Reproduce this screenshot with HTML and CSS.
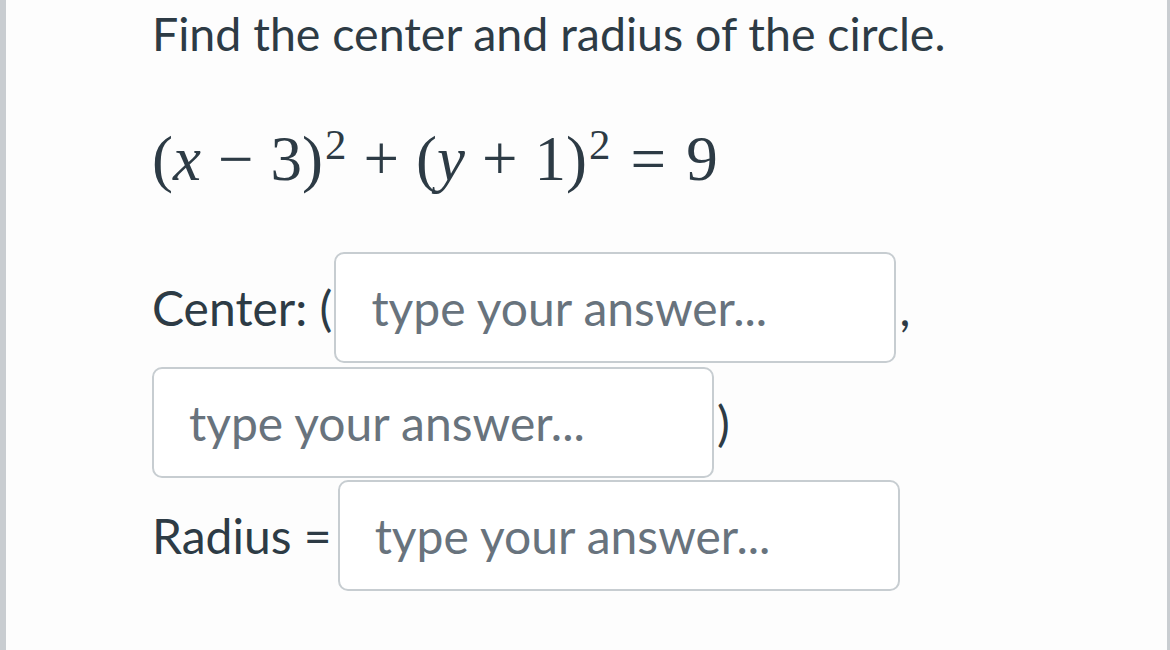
FILE: index.html
```html
<!DOCTYPE html>
<html lang="en">
<head>
<meta charset="utf-8">
<title>Find the center and radius of the circle</title>
<link rel="stylesheet" href="styles.css">
</head>
<body>
<div class="page">
  <div class="edge edge-left"></div>
  <main class="content">
    <p class="title">Find the center and radius of the circle.</p>
    <div class="math" aria-label="(x-3)^2+(y+1)^2=9">
      <span class="m-open">(</span><var>x</var><span class="bin">−</span><span>3</span><span class="m-close">)</span><sup>2</sup><span class="bin">+</span><span class="m-open">(</span><var>y</var><span class="bin">+</span><span>1</span><span class="m-close">)</span><sup>2</sup><span class="rel">=</span><span>9</span>
    </div>
    <div class="answers">
      <div class="row">
        <span class="label">Center: (</span><span class="field field-center">type your answer...</span><span class="after">,</span>
      </div>
      <div class="row row-second">
        <span class="field">type your answer...</span><span class="after">)</span>
      </div>
      <div class="row row-third">
        <span class="label">Radius =</span><span class="field field-radius">type your answer...</span>
      </div>
    </div>
  </main>
  <div class="edge edge-right"></div>
</div>
</body>
</html>
```
FILE: styles.css
```css
html, body {
  margin: 0;
  padding: 0;
  background: #fdfdfd;
}

.page {
  display: flex;
  min-height: 650px;
  width: 1170px;
}

.edge {
  background: #c9cdd1;
  flex: none;
}
.edge-left { width: 6px; }
.edge-right { width: 3px; margin-left: auto; }

.content {
  flex: 1;
  padding: 5px 0 0 146px;
  color: #2d3b45;
  font-family: Lato, "Open Sans", sans-serif;
  font-size: 48px;
}

.title {
  margin: 0;
  font-size: 46.5px;
  line-height: 57px;
}

.math {
  margin-top: 62px;
  font-family: "Liberation Serif", "DejaVu Serif", serif;
  font-size: 63px;
  line-height: 70px;
  white-space: nowrap;
}
.math var {
  font-style: italic;
}
.math sup {
  font-size: 0.68em;
  vertical-align: 0.48em;
  line-height: 0;
  margin-left: 2px;
}
.math .bin {
  margin: 0 0.27em;
}
.math .rel {
  margin: 0 0.32em;
}

.answers {
  margin-top: 58px;
  display: flex;
  flex-direction: column;
  gap: 4px;
}
.row {
  display: flex;
  align-items: baseline;
  line-height: 57px;
}
.row-third { margin-top: -2px; }

.label {
  white-space: pre;
}

.field {
  box-sizing: border-box;
  display: inline-flex;
  align-items: center;
  width: 562px;
  height: 111px;
  padding-left: 35px;
  border: 2px solid #c7cdd1;
  border-radius: 10px;
  background: #ffffff;
  color: #68737d;
}
.field-center { margin-left: 2px; }
.field-radius { margin-left: 6px; }

.after {
  margin-left: 3px;
}
```
